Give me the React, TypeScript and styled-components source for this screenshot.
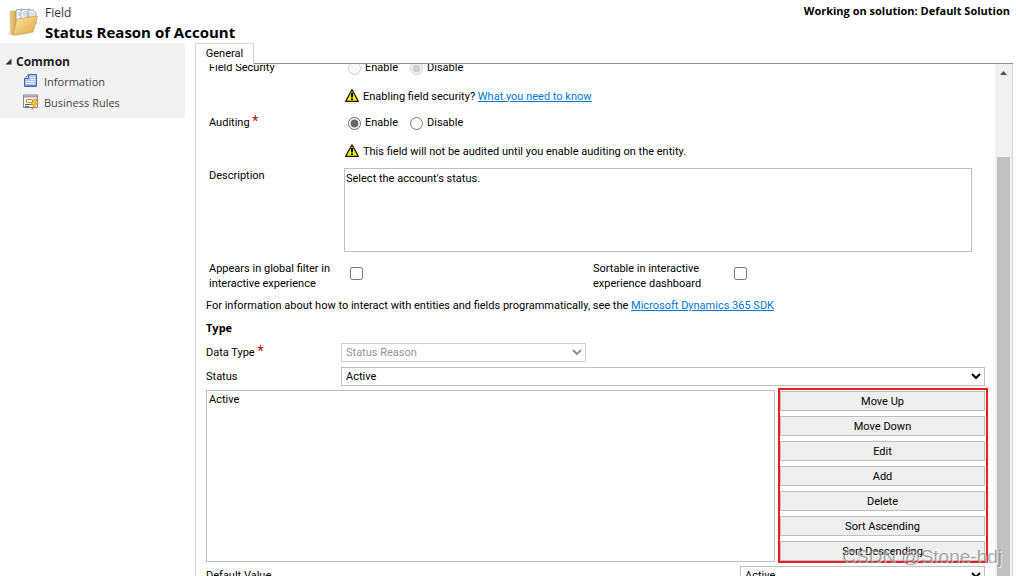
import React from "react";
import styled, { createGlobalStyle } from "styled-components";

const humanist = `"Open Sans", "Noto Sans", sans-serif`;

const GlobalStyle = createGlobalStyle`
  *, *::before, *::after { box-sizing: border-box; }
  body {
    margin: 0;
    background: #fff;
    color: #000;
    font: 11px/15px Roboto, "Noto Sans", sans-serif;
  }
  button, select, textarea, input { font: inherit; color: inherit; }
`;

const Page = styled.div`
  display: flex;
  flex-direction: column;
  height: 100vh;
  overflow: hidden;
`;

const Header = styled.header`
  display: flex;
  flex: none;
  height: 43px;
  padding: 0 6px 0 8px;
  font-family: ${humanist};
`;

const HeaderIcon = styled.svg`
  flex: none;
  width: 32px;
  height: 32px;
  margin: 6px 5px 0 0;
`;

const Heading = styled.div`
  flex: 1;
  padding-top: 3px;
`;

const Kind = styled.div`
  font-size: 12px;
  line-height: 19px;
  color: #333;
`;

const Title = styled.h1`
  margin: 0;
  font-size: 15px;
  line-height: 20px;
  font-weight: 700;
`;

const Solution = styled.div`
  padding-top: 3px;
  font-weight: 700;
`;

const Columns = styled.div`
  display: flex;
  flex: 1;
  min-height: 0;
  gap: 10px;
`;

const Sidebar = styled.nav`
  flex: none;
  align-self: flex-start;
  width: 185px;
  padding: 8px 0 6px 5px;
  background: #f2f2f2;
  font-family: ${humanist};
`;

const GroupTitle = styled.div`
  display: flex;
  align-items: center;
  gap: 4px;
  height: 20px;
  font-size: 12px;
  font-weight: 700;
  color: #222;
`;

const NavLink = styled.a`
  display: flex;
  align-items: center;
  gap: 5px;
  height: 20px;
  padding-left: 18px;
  color: #444;
  text-decoration: none;
  & + & { margin-top: 1px; }
`;

const Main = styled.main`
  display: flex;
  flex: 1;
  flex-direction: column;
  min-width: 0;
  margin-right: 3px;
`;

const TabBar = styled.div`
  display: flex;
  flex: none;
  height: 21px;
`;

const Tab = styled.button`
  width: 59px;
  padding: 0 0 2px;
  border: 1px solid #d6d6d6;
  border-bottom: 0;
  background: #fff;
`;

const TabRule = styled.div`
  flex: 1;
  border-bottom: 1px solid #8c8c9c;
`;

const Pane = styled.div`
  display: flex;
  flex: 1;
  min-height: 0;
  border: solid #d6d6d6;
  border-width: 0 1px;
`;

const Viewport = styled.div`
  flex: 1;
  min-width: 0;
  overflow: hidden;
`;

const Form = styled.form`
  margin-top: -7px;
  padding: 0 10px;
`;

const Scrollbar = styled.div`
  flex: none;
  width: 17px;
  padding: 7px 2px 0;
  background: #f1f1f1;
`;

const ScrollArrow = styled.svg`
  display: block;
  width: 7px;
  height: 4px;
  margin: 0 auto 82px 3px;
`;

const ScrollThumb = styled.div`
  height: 100%;
  background: #c1c1c1;
`;

const Fields = styled.div`
  display: grid;
  grid-template-columns: 135px 1fr;
  margin: 0 13px 0 3px;
`;

const FieldRow = styled.div`
  display: grid;
  grid-column: 1 / -1;
  grid-template-columns: subgrid;
  align-items: center;
  height: 20px;
  margin-bottom: 6px;
`;

const Required = styled.span`
  color: #c00000;
  font-size: 14px;
  line-height: 10px;
`;

const Choices = styled.div`
  display: flex;
  padding-left: 4px;
`;

const Choice = styled.label`
  display: flex;
  align-items: center;
  gap: 4px;
  width: 62px;
`;

const Radio = styled.input`
  flex: none;
  width: 13px;
  height: 13px;
  margin: 2px 0 0;
  accent-color: #666;
`;

const Notice = styled.div`
  display: flex;
  grid-column: 2;
  align-items: center;
  gap: 4px;
  height: 20px;
  margin: 3px 0 6px 1px;
  white-space: pre;
`;

const WarningSvg = styled.svg`
  flex: none;
  width: 14px;
  height: 13px;
  margin-bottom: 2px;
`;

const Link = styled.a`
  color: #0078d7;
  text-decoration: underline;
`;

const DescriptionLabel = styled.label`
  padding-top: 1px;
`;

const Description = styled.textarea`
  display: block;
  width: 100%;
  height: 84px;
  margin-top: 1px;
  padding: 2px 1px;
  border: 1px solid #bfbfbf;
  border-radius: 0;
  background: #fff;
  resize: none;
`;

const Checks = styled.div`
  display: grid;
  grid-template-columns: 135px 249px 135px 1fr;
  margin: 9px 0 7px 3px;
`;

const CheckLabel = styled.label`
  padding-right: 8px;
`;

const Checkbox = styled.input`
  width: 13px;
  height: 13px;
  margin: 6px 0 0 6px;
`;

const Info = styled.p`
  margin: 0 0 7px;
`;

const SectionTitle = styled.h2`
  margin: 0 0 8px;
  font: 700 11px/15px ${humanist};
`;

const TypeRow = styled.div`
  display: grid;
  grid-template-columns: 135px 1fr;
  align-items: center;
  margin-bottom: 5px;
`;

const Select = styled.select<{ $width?: string }>`
  width: ${(p) => p.$width ?? "100%"};
  height: 19px;
  padding: 0;
  border: 1px solid #bfbfbf;
  border-radius: 0;
  background: #fff;
  &:disabled { color: #666; }
`;

const OptionEditor = styled.div`
  display: flex;
  align-items: flex-start;
  gap: 3px;
  height: 172px;
  margin: -1px -3px 4px 0;
`;

const OptionList = styled.select`
  flex: 1;
  height: 172px;
  padding: 2px 0;
  border: 1px solid #bfbfbf;
  border-radius: 0;
  background: #fff;
  overflow: hidden;
`;

const Actions = styled.div`
  display: flex;
  flex: none;
  flex-direction: column;
  gap: 5px;
  width: 210px;
  margin-top: -2px;
  padding: 1px 1px 0 0;
  border: 2px solid #ed1c24;
`;

const Action = styled.button`
  height: 20px;
  padding: 0;
  border: 1px solid #bfbfbf;
  background: #efefef;
`;

const DefaultRow = styled.div`
  display: grid;
  grid-template-columns: 1fr 245px;
  align-items: center;
`;

const Watermark = styled.div`
  position: absolute;
  right: 14px;
  bottom: 8px;
  color: rgba(110, 110, 110, 0.6);
  font: 19px/23px "Liberation Sans", sans-serif;
  text-shadow: 1px 1px 0 rgba(255, 255, 255, 0.6);
  pointer-events: none;
`;

const FolderIcon = () => (
  <HeaderIcon viewBox="0 0 32 32" aria-hidden="true">
    <defs>
      <linearGradient id="front" x1="0" y1="0" x2="1" y2="1">
        <stop offset="0" stopColor="#fde9b0" />
        <stop offset="1" stopColor="#e3a535" />
      </linearGradient>
      <linearGradient id="back" x1="0" y1="0" x2="1" y2="0">
        <stop offset="0" stopColor="#efd08c" />
        <stop offset="1" stopColor="#d4a040" />
      </linearGradient>
    </defs>
    <path d="M-1 29L3 23L24 27L10 30Z" fill="#e4e4e4" />
    <path d="M2 6Q2 5 3 5H7L9 7V26L5 29L3 27Z" fill="url(#back)" stroke="#d0a14c" strokeWidth=".6" />
    <path d="M8 4L15 3L18 6V20H8Z" fill="#f3f5f8" stroke="#8794a5" strokeWidth=".8" />
    <path d="M13 4L21 3L24 6V20H13Z" fill="#fff" stroke="#8794a5" strokeWidth=".8" />
    <path d="M20 4L25 4L28 7V18H20Z" fill="#edf1f6" stroke="#8794a5" strokeWidth=".8" />
    <path d="M15 6H20M15 8H22M10 7H12M23 8H26M10 9H12M15 10H22" stroke="#93a5bd" strokeWidth=".8" />
    <path d="M9 14Q9 13 10 13L28 10Q30 10 29 12L25 26L5 29L8 16Z" fill="url(#front)" stroke="#cf9a35" strokeWidth=".7" />
  </HeaderIcon>
);

const InformationIcon = () => (
  <svg width="16" height="16" viewBox="0 0 16 16" aria-hidden="true">
    <path d="M5.500 1.500H13.500V13.500H1.500V5.500Z" fill="#a9c1ee" stroke="#4667b0" />
    <path d="M2 5.500H5.500V2" fill="#e6eefc" stroke="#4667b0" />
    <path d="M7 4.500H12M7 6.500H12M3 8.500H12M3 10.500H12" stroke="#e6eefc" />
    <path d="M2 12.500H13" stroke="#6d8cd0" />
  </svg>
);

const RulesIcon = () => (
  <svg width="16" height="16" viewBox="0 0 16 16" aria-hidden="true">
    <path d="M.500 1H14.500V13.500H.500Z" fill="#fff" stroke="#7f8791" />
    <path d="M1 2.500H14" stroke="#9ba6b4" strokeWidth="2" />
    <path d="M3.500 5.500H9.500V8.500H3.500Z" fill="#fff" stroke="#e58a1f" />
    <path d="M2 10.500H8M2 12.500H6" stroke="#55647a" />
    <path d="M11.500 5L8 10.500H10.500L9 15.500L15 9H12L14.500 5Z" fill="#ffd34d" stroke="#b97a10" strokeWidth=".7" />
  </svg>
);

const WarningIcon = () => (
  <WarningSvg viewBox="0 0 14 13" aria-hidden="true">
    <path d="M7 .7L13.300 12.300H.7Z" fill="#ffee00" stroke="#111100" strokeWidth="1.300" strokeLinejoin="round" />
    <path d="M6 4H8V8.500H6ZM6 9.500H8V11H6Z" fill="#000" />
  </WarningSvg>
);

const actions = ["Move Up", "Move Down", "Edit", "Add", "Delete", "Sort Ascending", "Sort Descending"];

function EnableChoice({ name, value, disabled }: { name: string; value: string; disabled?: boolean }) {
  return (
    <Choices role="radiogroup" aria-label={name}>
      {["Enable", "Disable"].map((option) => (
        <Choice key={option}>
          <Radio type="radio" name={name} defaultChecked={option === value} disabled={disabled} />
          {option}
        </Choice>
      ))}
    </Choices>
  );
}

export default function App() {
  return (
    <Page>
      <GlobalStyle />
      <Header>
        <FolderIcon />
        <Heading>
          <Kind>Field</Kind>
          <Title>Status Reason of Account</Title>
        </Heading>
        <Solution>Working on solution: Default Solution</Solution>
      </Header>
      <Columns>
        <Sidebar>
          <GroupTitle>
            <svg width="7" height="7" viewBox="0 0 7 7" aria-hidden="true">
              <path d="M6.500 .5V6.500H.5Z" fill="#333" />
            </svg>
            Common
          </GroupTitle>
          <NavLink href="#information"><InformationIcon />Information</NavLink>
          <NavLink href="#rules"><RulesIcon />Business Rules</NavLink>
        </Sidebar>
        <Main>
          <TabBar>
            <Tab type="button">General</Tab>
            <TabRule />
          </TabBar>
          <Pane>
            <Viewport>
              <Form>
                <Fields>
                  <FieldRow>
                    <span>Field Security</span>
                    <EnableChoice name="security" value="Disable" disabled />
                  </FieldRow>
                  <Notice>
                    <WarningIcon />
                    <span>Enabling field security? <Link href="#learn">What you need to know</Link></span>
                  </Notice>
                  <FieldRow>
                    <span>Auditing <Required>*</Required></span>
                    <EnableChoice name="auditing" value="Enable" />
                  </FieldRow>
                  <Notice>
                    <WarningIcon />
                    <span>This field will not be audited until you enable auditing on the entity.</span>
                  </Notice>
                  <DescriptionLabel htmlFor="description">Description</DescriptionLabel>
                  <Description id="description" defaultValue="Select the account's status." />
                </Fields>
                <Checks>
                  <CheckLabel htmlFor="filter">Appears in global filter in interactive experience</CheckLabel>
                  <Checkbox id="filter" type="checkbox" />
                  <CheckLabel htmlFor="sortable">Sortable in interactive experience dashboard</CheckLabel>
                  <Checkbox id="sortable" type="checkbox" />
                </Checks>
                <Info>
                  For information about how to interact with entities and fields programmatically, see the{" "}
                  <Link href="#sdk">Microsoft Dynamics 365 SDK</Link>
                </Info>
                <SectionTitle>Type</SectionTitle>
                <TypeRow>
                  <label htmlFor="datatype">Data Type <Required>*</Required></label>
                  <Select id="datatype" $width="245px" disabled><option>Status Reason</option></Select>
                </TypeRow>
                <TypeRow>
                  <label htmlFor="status">Status</label>
                  <Select id="status"><option>Active</option></Select>
                </TypeRow>
                <OptionEditor>
                  <OptionList size={10} aria-label="Options"><option>Active</option></OptionList>
                  <Actions>
                    {actions.map((label) => <Action type="button" key={label}>{label}</Action>)}
                  </Actions>
                </OptionEditor>
                <DefaultRow>
                  <label htmlFor="default">Default Value</label>
                  <Select id="default"><option>Active</option></Select>
                </DefaultRow>
              </Form>
            </Viewport>
            <Scrollbar>
              <ScrollArrow viewBox="0 0 7 4" aria-hidden="true">
                <path d="M0 4L3.500 0L7 4Z" fill="#505050" />
              </ScrollArrow>
              <ScrollThumb />
            </Scrollbar>
          </Pane>
        </Main>
      </Columns>
      <Watermark>CSDN @Stone-hdj</Watermark>
    </Page>
  );
}
